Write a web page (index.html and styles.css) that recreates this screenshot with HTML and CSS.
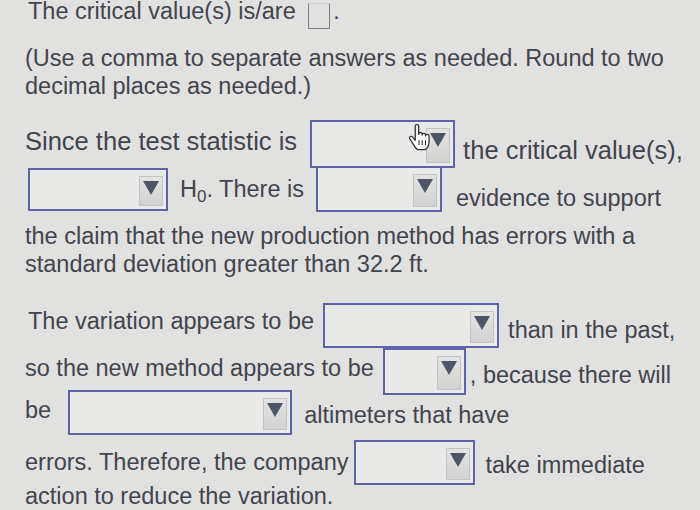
FILE: index.html
```html
<!DOCTYPE html>
<html>
<head>
<meta charset="utf-8">
<link rel="stylesheet" href="styles.css">
</head>
<body>
<div class="q">
  <div class="line first">The critical value(s) is/are <span class="ansbox"></span>.</div>
  <p class="para p1">(Use a comma to separate answers as needed. Round to two<br>decimal places as needed.)</p>

  <div class="row rA">
    <span class="up3">Since the test statistic is</span>
    <span class="dd wA"><span class="btn"><span class="tri"></span></span>
      <svg class="hand" viewBox="0 0 22 26" width="24" height="28">
        <path d="M7.5 2.2a1.6 1.6 0 0 1 3.2 0v7.3a1.6 1.6 0 0 1 3.2 0v0.8a1.6 1.6 0 0 1 3.2 0v0.9a1.6 1.6 0 0 1 3.2 0v5.2q0 4.6-3.6 7.4h-7.2q-1.8-1.2-3.6-4.6l-3.4-5.4a1.5 1.5 0 0 1 2.4-1.8l2.6 3.2z" fill="#fff" stroke="#333" stroke-width="1.2" stroke-linejoin="round"/>
        <path d="M11 15v4.5M14 15v4.5M17 15v4.5" stroke="#333" stroke-width="1"/>
      </svg>
    </span>
    <span class="dn6">the critical value(s),</span>
  </div>

  <div class="row rB">
    <span class="dd wB ml0"><span class="btn"><span class="tri"></span></span></span>
    <span>H<sub>0</sub>. There is</span>
    <span class="dd wC dn5"><span class="btn"><span class="tri"></span></span></span>
    <span class="dn9 ml8">evidence to support</span>
  </div>

  <p class="para p2">the claim that the new production method has errors with a<br>standard deviation greater than 32.2 ft.</p>

  <div class="row rD">
    <span class="up4">The variation appears to be</span>
    <span class="dd wD"><span class="btn"><span class="tri"></span></span></span>
    <span class="dn5">than in the past,</span>
  </div>

  <div class="row rE">
    <span class="up3">so the new method appears to be</span>
    <span class="dd wE"><span class="btn"><span class="tri"></span></span></span>
    <span class="dn4 tight">, because there will</span>
  </div>

  <div class="row rF">
    <span class="up2">be</span>
    <span class="dd wF"><span class="btn"><span class="tri"></span></span></span>
    <span class="dn3">altimeters that have</span>
  </div>

  <div class="row rG">
    <span>errors. Therefore, the company</span>
    <span class="dd wG"><span class="btn"><span class="tri"></span></span></span>
    <span class="dn3">take immediate</span>
  </div>

  <p class="para p3">action to reduce the variation.</p>
</div>
</body>
</html>
```
FILE: styles.css
```css
html, body {
  margin: 0;
  padding: 0;
  background: #e1e1df;
  width: 700px;
  height: 510px;
  overflow: hidden;
}

.q {
  font-family: "Liberation Sans", Arial, sans-serif;
  font-size: 23.5px;
  line-height: 28px;
  color: #42444e;
  padding-left: 25px;
  margin-top: -3px;
}

.line.first {
  height: 28px;
  padding-left: 3px;
  display: flex;
  align-items: center;
  white-space: pre;
}

.ansbox {
  display: inline-block;
  width: 20px;
  height: 24px;
  margin: 10px 3px 0 6px;
  border: 1.5px solid #7c7e86;
  border-top-color: #d2d2d2;
}

.para {
  margin: 0;
}
.p1 { margin-top: 19px; }
.p2 { margin-top: 13px; }
.p3 { margin-top: 0; }

.row {
  display: flex;
  align-items: center;
  height: 40px;
  white-space: nowrap;
}
.rA { margin-top: 24px; font-size: 25.5px; }
.rB { margin-top: 5px; }
.rD { margin-top: 27px; padding-left: 3px; }
.rE { margin-top: 6px; }
.rF { margin-top: 1px; }
.rG { margin-top: 10px; }

.dd {
  position: relative;
  flex: none;
  box-sizing: border-box;
  height: 46px;
  margin: 0 9px 0 9px;
  border: 2px solid #5d63a6;
  background: #e9e9e7;
}
.wA { width: 145px; height: 48px; margin-left: 13px; margin-right: 8px; }
.wB { width: 140px; height: 43px; }
.wC { width: 126px; margin-left: 12px; margin-right: 6px; }
.wD { width: 176px; height: 45px; }
.wE { width: 83px; height: 47px; }
.wF { width: 224px; height: 45px; margin-left: 17px; margin-right: 12px; }
.wG { width: 121px; height: 45px; margin-left: 5px; margin-right: 11px; }

.ml0 { margin-left: 3px; margin-right: 12px; }
.ml8 { margin-left: 8px; }
.tight { margin-left: -5px; }

.btn {
  position: absolute;
  right: 3px;
  top: 6px;
  bottom: 3px;
  width: 24px;
  box-sizing: border-box;
  border: 1px solid #c4c4c4;
  background: linear-gradient(#e4e4e3, #d2d2d1);
}
.tri {
  position: absolute;
  left: 3px;
  top: 4px;
  width: 0;
  height: 0;
  border-left: 8px solid transparent;
  border-right: 8px solid transparent;
  border-top: 14px solid #4d5667;
}

.hand {
  position: absolute;
  right: 22px;
  top: 2px;
}

sub {
  font-size: 17px;
  vertical-align: -5px;
  line-height: 0;
}

.dn3 { padding-top: 6px; }
.dn4 { padding-top: 8px; }
.dn5 { padding-top: 10px; }
.dn6 { padding-top: 12px; }
.dn9 { padding-top: 18px; }
.up2 { padding-bottom: 4px; }
.up3 { padding-bottom: 6px; }
.up4 { padding-bottom: 8px; }
```
